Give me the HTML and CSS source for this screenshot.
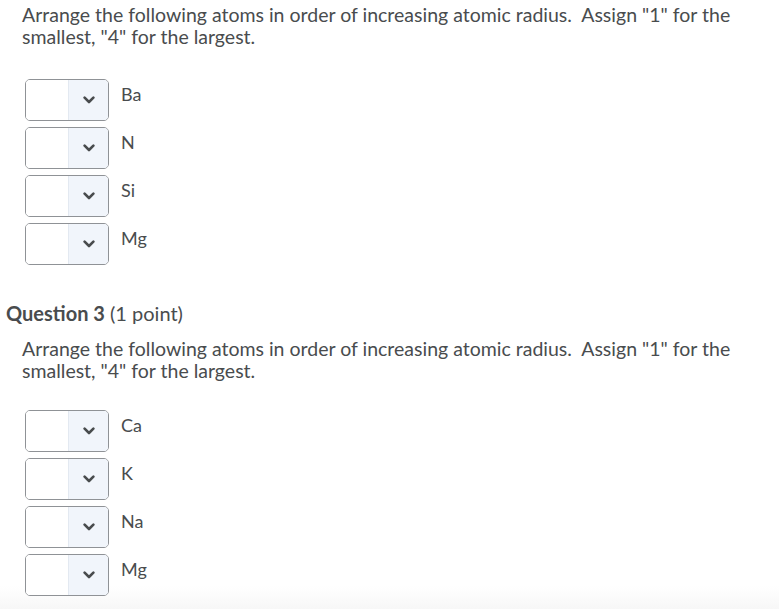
FILE: index.html
```html
<!DOCTYPE html>
<html>
<head>
<meta charset="utf-8">
<link rel="stylesheet" href="styles.css">
</head>
<body>
<div class="page">
  <div class="question">
    <p class="prompt">Arrange the following atoms in order of increasing atomic radius.&nbsp; Assign "1" for the smallest, "4" for the largest.</p>
    <div class="items">
      <div class="item"><div class="sel"><span class="val"></span><span class="arrow"><svg width="12" height="8" viewBox="0 0 12 8"><path d="M1.6 1.6 L6 6 L10.4 1.6" fill="none" stroke="#494c4e" stroke-width="2.6" stroke-linecap="round" stroke-linejoin="round"/></svg></span></div><span class="label">Ba</span></div>
      <div class="item"><div class="sel"><span class="val"></span><span class="arrow"><svg width="12" height="8" viewBox="0 0 12 8"><path d="M1.6 1.6 L6 6 L10.4 1.6" fill="none" stroke="#494c4e" stroke-width="2.6" stroke-linecap="round" stroke-linejoin="round"/></svg></span></div><span class="label">N</span></div>
      <div class="item"><div class="sel"><span class="val"></span><span class="arrow"><svg width="12" height="8" viewBox="0 0 12 8"><path d="M1.6 1.6 L6 6 L10.4 1.6" fill="none" stroke="#494c4e" stroke-width="2.6" stroke-linecap="round" stroke-linejoin="round"/></svg></span></div><span class="label">Si</span></div>
      <div class="item"><div class="sel"><span class="val"></span><span class="arrow"><svg width="12" height="8" viewBox="0 0 12 8"><path d="M1.6 1.6 L6 6 L10.4 1.6" fill="none" stroke="#494c4e" stroke-width="2.6" stroke-linecap="round" stroke-linejoin="round"/></svg></span></div><span class="label">Mg</span></div>
    </div>
  </div>

  <h2 class="qtitle"><strong>Question 3</strong> (1 point)</h2>

  <div class="question">
    <p class="prompt">Arrange the following atoms in order of increasing atomic radius.&nbsp; Assign "1" for the smallest, "4" for the largest.</p>
    <div class="items items-q3">
      <div class="item"><div class="sel"><span class="val"></span><span class="arrow"><svg width="12" height="8" viewBox="0 0 12 8"><path d="M1.6 1.6 L6 6 L10.4 1.6" fill="none" stroke="#494c4e" stroke-width="2.6" stroke-linecap="round" stroke-linejoin="round"/></svg></span></div><span class="label">Ca</span></div>
      <div class="item"><div class="sel"><span class="val"></span><span class="arrow"><svg width="12" height="8" viewBox="0 0 12 8"><path d="M1.6 1.6 L6 6 L10.4 1.6" fill="none" stroke="#494c4e" stroke-width="2.6" stroke-linecap="round" stroke-linejoin="round"/></svg></span></div><span class="label">K</span></div>
      <div class="item"><div class="sel"><span class="val"></span><span class="arrow"><svg width="12" height="8" viewBox="0 0 12 8"><path d="M1.6 1.6 L6 6 L10.4 1.6" fill="none" stroke="#494c4e" stroke-width="2.6" stroke-linecap="round" stroke-linejoin="round"/></svg></span></div><span class="label">Na</span></div>
      <div class="item"><div class="sel"><span class="val"></span><span class="arrow"><svg width="12" height="8" viewBox="0 0 12 8"><path d="M1.6 1.6 L6 6 L10.4 1.6" fill="none" stroke="#494c4e" stroke-width="2.6" stroke-linecap="round" stroke-linejoin="round"/></svg></span></div><span class="label">Mg</span></div>
    </div>
  </div>
</div>
</body>
</html>
```
FILE: styles.css
```css
html, body {
  margin: 0;
  padding: 0;
}
body {
  font-family: Lato, "Open Sans", sans-serif;
  color: #494c4e;
  width: 779px;
  height: 609px;
  overflow: hidden;
  background: linear-gradient(to bottom, #ffffff 0, #ffffff 586px, #f7f7f7 609px);
}
.page {
  padding: 4px 0 0 0;
}
.question {
  padding-left: 22px;
}
.prompt {
  margin: 0;
  font-size: 19.5px;
  line-height: 22px;
  width: 740px;
}
.items {
  display: flex;
  flex-direction: column;
  gap: 6px;
  margin-top: 31px;
  padding-left: 3px;
}
.items-q3 {
  margin-top: 28px;
}
.item {
  display: flex;
  align-items: flex-start;
  gap: 12px;
}
.sel {
  width: 84px;
  height: 42px;
  box-sizing: border-box;
  border: 1px solid #8f9296;
  border-radius: 5px;
  display: flex;
  overflow: hidden;
  background: #fff;
}
.val {
  width: 42px;
  background: #fff;
}
.arrow {
  flex: 1;
  background: #f1f5fb;
  border-left: 1px solid #e3e9f1;
  display: flex;
  align-items: center;
  justify-content: center;
}
.label {
  font-size: 18px;
  line-height: 22px;
  margin-top: 4px;
}
.qtitle {
  margin: 36px 0 0 6px;
  font-size: 20px;
  line-height: 24px;
  font-weight: normal;
  height: 37px;
}
.qtitle strong {
  font-weight: bold;
}
```
